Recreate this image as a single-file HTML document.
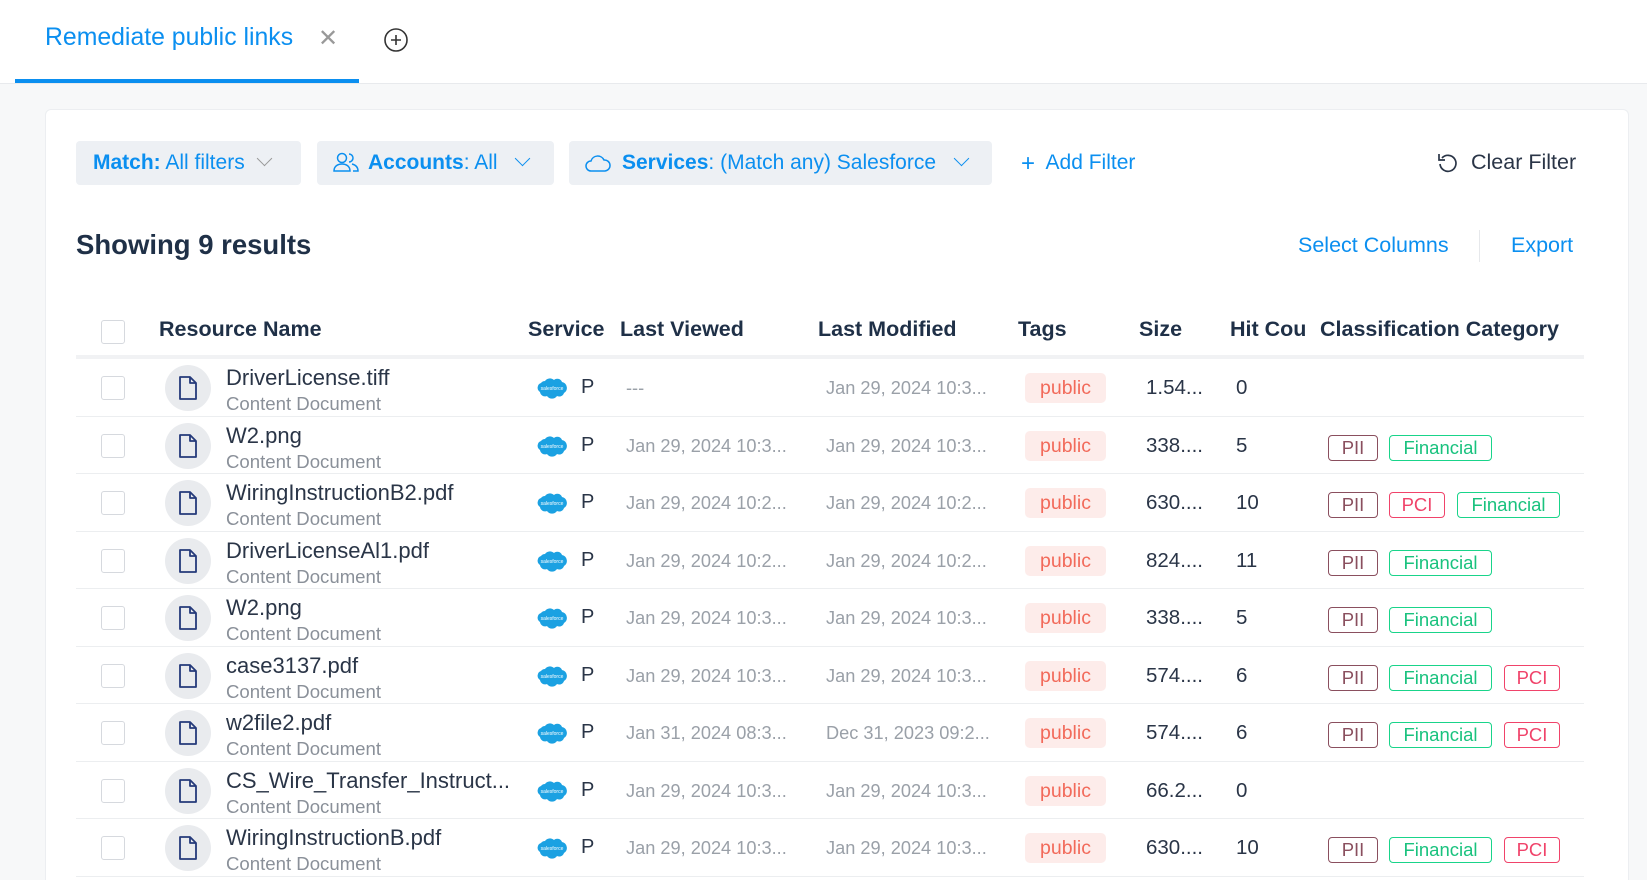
<!DOCTYPE html>
<html style="width:1647px;height:880px;overflow:hidden"><head><meta charset="utf-8"><style>
*{box-sizing:border-box;margin:0;padding:0}
body{width:1647px;height:880px;overflow:hidden;background:#f7f8f9;font-family:"Liberation Sans",sans-serif;color:#2a3547;position:relative}
.a{position:absolute;white-space:nowrap}
.top{position:absolute;left:0;top:0;width:1647px;height:84px;background:#fff;border-bottom:1px solid #e8eaed}
.card{position:absolute;left:45px;top:109px;width:1584px;height:771px;background:#fff;border:1px solid #eceef1;border-bottom:none;border-radius:6px 6px 0 0}
.chip{position:absolute;top:141px;height:44px;background:#edf0f4;border-radius:4px;color:#0b8ff0;font-size:21px;line-height:44px;padding-left:17px}
.chip b{color:#0b8ff0}
.cb{position:absolute;width:24px;height:24px;border:1px solid #d6d9de;border-radius:3px;background:#fff}
.th{position:absolute;top:317px;font-weight:bold;font-size:21.5px;color:#1f3047}
.row{position:absolute;left:76px;width:1508px;height:57.5px;border-bottom:1px solid #eceef0}
.row>*{position:absolute}
.ic{left:89px;top:6px;width:46px;height:46px;border-radius:50%;background:#e9ebee}
.ic svg{position:absolute;left:13px;top:10px}
.nm{left:150px;top:6px;font-size:22px;color:#2a3547}
.sb{left:150px;top:34px;font-size:18.6px;color:#8a9099}
.sf{left:460px;top:18px}
.p{left:505px;top:17px;font-size:20px;color:#2a3547}
.dt{top:19px;font-size:18.2px;color:#9aa0a8}
.pub{left:949px;top:14px;width:81px;height:30px;border-radius:5px;background:#fdecea;color:#f26a5a;font-size:19.5px;line-height:30px;text-align:center}
.sz{left:1070px;top:17px;font-size:20.5px}
.hc{left:1160px;top:17px;font-size:20.5px}
.tg{top:18px;height:26px;border:1px solid;border-radius:4px;font-size:18.5px;line-height:24px;text-align:center}
.pii{border-color:#8a4f5e;color:#8a4f5e;width:50px}
.pci{border-color:#f0436a;color:#f0436a;width:56px}
.fin{border-color:#19d48a;color:#19c27e;width:103px}
.chev{display:inline-block;width:11px;height:11px;border-right:1.6px solid;border-bottom:1.6px solid;transform:rotate(45deg);vertical-align:5px}
</style></head><body>
<div class="top">
 <div class="a" style="left:45px;top:24px;font-size:24.8px;color:#0b8ff0">Remediate public links</div>
 <div class="a" style="left:318px;top:24px;font-size:24px;color:#999">&#x2715;</div>
 <svg class="a" style="left:383px;top:27px" width="26" height="26" viewBox="0 0 26 26"><circle cx="13" cy="13" r="11" fill="none" stroke="#333" stroke-width="1.6"/><path d="M13 8v10M8 13h10" stroke="#333" stroke-width="1.6"/></svg>
 <div class="a" style="left:15px;top:79px;width:344px;height:4px;background:#0b8ff0"></div>
</div>
<div class="card"></div>
<div class="chip" style="left:76px;width:225px"><b>Match:</b> All filters <span class="chev" style="color:#999;margin-left:8px"></span></div>
<div class="chip" style="left:317px;width:237px;padding-left:15px">
 <svg style="vertical-align:-4px;margin-right:8px" width="28" height="22" viewBox="0 0 28 22"><circle cx="10" cy="7" r="4.5" fill="none" stroke="#0b8ff0" stroke-width="1.5"/><path d="M2 20c0-5 4-7 8-7s8 2 8 7z" fill="none" stroke="#0b8ff0" stroke-width="1.5"/><path d="M17 3a4 4 0 1 1 0 8M20 13c4 1 6 3 6 7h-5" fill="none" stroke="#0b8ff0" stroke-width="1.5"/></svg><b>Accounts</b>: All <span class="chev" style="margin-left:14px"></span></div>
<div class="chip" style="left:569px;width:423px;padding-left:15px">
 <svg style="vertical-align:-4px;margin-right:10px" width="28" height="20" viewBox="0 0 28 20"><path d="M7 18a5 5 0 0 1 0-10 7 7 0 0 1 13-1 5.5 5.5 0 0 1 1 11z" fill="none" stroke="#0b8ff0" stroke-width="1.5"/></svg><b>Services</b>: (Match any) Salesforce <span class="chev" style="margin-left:14px"></span></div>
<div class="a" style="left:1021px;top:150px;font-size:21px;color:#0b8ff0"><span style="font-size:24px;vertical-align:-2px">+</span>&nbsp; Add Filter</div>
<svg class="a" style="left:1437px;top:152px" width="22" height="22" viewBox="0 0 22 22"><path d="M5 6A8 8 0 1 1 3 12" fill="none" stroke="#2a3547" stroke-width="1.7"/><path d="M2 2v6h6" fill="none" stroke="#2a3547" stroke-width="1.7"/></svg>
<div class="a" style="left:1471px;top:150px;font-size:21.5px;color:#2a3547">Clear Filter</div>
<div class="a" style="left:76px;top:229px;font-size:27.5px;font-weight:bold;color:#1f3047">Showing 9 results</div>
<div class="a" style="left:1298px;top:233px;font-size:21.5px;color:#0b8ff0">Select Columns</div>
<div class="a" style="left:1479px;top:230px;width:1px;height:32px;background:#e6e8eb"></div>
<div class="a" style="left:1511px;top:233px;font-size:21.5px;color:#0b8ff0">Export</div>
<div class="cb" style="left:101px;top:320px"></div>
<div class="th" style="left:159px">Resource Name</div>
<div class="th" style="left:528px">Service</div>
<div class="th" style="left:620px">Last Viewed</div>
<div class="th" style="left:818px">Last Modified</div>
<div class="th" style="left:1018px">Tags</div>
<div class="th" style="left:1139px">Size</div>
<div class="th" style="left:1230px">Hit Cou</div>
<div class="th" style="left:1320px">Classification Category</div>
<div class="a" style="left:76px;top:355px;width:1508px;height:4px;background:#f1f2f4"></div>

<svg width="0" height="0" style="position:absolute"><defs>
<symbol id="doc" viewBox="0 0 20 26"><path d="M2 2h10l6 6v16H2z M12 2v6h6" fill="none" stroke="#253a7a" stroke-width="1.8" stroke-linejoin="round"/></symbol>
<symbol id="sfl" viewBox="0 0 32 22"><path d="M9 4a6 6 0 0 1 9-1 5 5 0 0 1 8 2 6 6 0 0 1 2 11 5 5 0 0 1-7 3 6 6 0 0 1-10 0 5 5 0 0 1-7-4 5 5 0 0 1 1-9 5 5 0 0 1 4-2z" fill="#1ba1e2"/><text x="16" y="13" font-size="5" fill="#fff" text-anchor="middle" font-family="Liberation Sans">salesforce</text></symbol>
</defs></svg>

<div class="row" style="top:359px"><div class="cb" style="left:25px;top:17px"></div><div class="ic"><svg width="20" height="26"><use href="#doc"/></svg></div><div class="nm">DriverLicense.tiff</div><div class="sb">Content Document</div><svg class="sf" width="32" height="22"><use href="#sfl"/></svg><div class="p">P</div><div class="dt" style="left:550px">---</div><div class="dt" style="left:750px">Jan 29, 2024 10:3...</div><div class="pub">public</div><div class="sz">1.54...</div><div class="hc">0</div></div>
<div class="row" style="top:416.5px"><div class="cb" style="left:25px;top:17px"></div><div class="ic"><svg width="20" height="26"><use href="#doc"/></svg></div><div class="nm">W2.png</div><div class="sb">Content Document</div><svg class="sf" width="32" height="22"><use href="#sfl"/></svg><div class="p">P</div><div class="dt" style="left:550px">Jan 29, 2024 10:3...</div><div class="dt" style="left:750px">Jan 29, 2024 10:3...</div><div class="pub">public</div><div class="sz">338....</div><div class="hc">5</div><div class="tg pii" style="left:1252px">PII</div><div class="tg fin" style="left:1313px">Financial</div></div>
<div class="row" style="top:474px"><div class="cb" style="left:25px;top:17px"></div><div class="ic"><svg width="20" height="26"><use href="#doc"/></svg></div><div class="nm">WiringInstructionB2.pdf</div><div class="sb">Content Document</div><svg class="sf" width="32" height="22"><use href="#sfl"/></svg><div class="p">P</div><div class="dt" style="left:550px">Jan 29, 2024 10:2...</div><div class="dt" style="left:750px">Jan 29, 2024 10:2...</div><div class="pub">public</div><div class="sz">630....</div><div class="hc">10</div><div class="tg pii" style="left:1252px">PII</div><div class="tg pci" style="left:1313px">PCI</div><div class="tg fin" style="left:1381px">Financial</div></div>
<div class="row" style="top:531.5px"><div class="cb" style="left:25px;top:17px"></div><div class="ic"><svg width="20" height="26"><use href="#doc"/></svg></div><div class="nm">DriverLicenseAl1.pdf</div><div class="sb">Content Document</div><svg class="sf" width="32" height="22"><use href="#sfl"/></svg><div class="p">P</div><div class="dt" style="left:550px">Jan 29, 2024 10:2...</div><div class="dt" style="left:750px">Jan 29, 2024 10:2...</div><div class="pub">public</div><div class="sz">824....</div><div class="hc">11</div><div class="tg pii" style="left:1252px">PII</div><div class="tg fin" style="left:1313px">Financial</div></div>
<div class="row" style="top:589px"><div class="cb" style="left:25px;top:17px"></div><div class="ic"><svg width="20" height="26"><use href="#doc"/></svg></div><div class="nm">W2.png</div><div class="sb">Content Document</div><svg class="sf" width="32" height="22"><use href="#sfl"/></svg><div class="p">P</div><div class="dt" style="left:550px">Jan 29, 2024 10:3...</div><div class="dt" style="left:750px">Jan 29, 2024 10:3...</div><div class="pub">public</div><div class="sz">338....</div><div class="hc">5</div><div class="tg pii" style="left:1252px">PII</div><div class="tg fin" style="left:1313px">Financial</div></div>
<div class="row" style="top:646.5px"><div class="cb" style="left:25px;top:17px"></div><div class="ic"><svg width="20" height="26"><use href="#doc"/></svg></div><div class="nm">case3137.pdf</div><div class="sb">Content Document</div><svg class="sf" width="32" height="22"><use href="#sfl"/></svg><div class="p">P</div><div class="dt" style="left:550px">Jan 29, 2024 10:3...</div><div class="dt" style="left:750px">Jan 29, 2024 10:3...</div><div class="pub">public</div><div class="sz">574....</div><div class="hc">6</div><div class="tg pii" style="left:1252px">PII</div><div class="tg fin" style="left:1313px">Financial</div><div class="tg pci" style="left:1428px">PCI</div></div>
<div class="row" style="top:704px"><div class="cb" style="left:25px;top:17px"></div><div class="ic"><svg width="20" height="26"><use href="#doc"/></svg></div><div class="nm">w2file2.pdf</div><div class="sb">Content Document</div><svg class="sf" width="32" height="22"><use href="#sfl"/></svg><div class="p">P</div><div class="dt" style="left:550px">Jan 31, 2024 08:3...</div><div class="dt" style="left:750px">Dec 31, 2023 09:2...</div><div class="pub">public</div><div class="sz">574....</div><div class="hc">6</div><div class="tg pii" style="left:1252px">PII</div><div class="tg fin" style="left:1313px">Financial</div><div class="tg pci" style="left:1428px">PCI</div></div>
<div class="row" style="top:761.5px"><div class="cb" style="left:25px;top:17px"></div><div class="ic"><svg width="20" height="26"><use href="#doc"/></svg></div><div class="nm">CS_Wire_Transfer_Instruct...</div><div class="sb">Content Document</div><svg class="sf" width="32" height="22"><use href="#sfl"/></svg><div class="p">P</div><div class="dt" style="left:550px">Jan 29, 2024 10:3...</div><div class="dt" style="left:750px">Jan 29, 2024 10:3...</div><div class="pub">public</div><div class="sz">66.2...</div><div class="hc">0</div></div>
<div class="row" style="top:819px"><div class="cb" style="left:25px;top:17px"></div><div class="ic"><svg width="20" height="26"><use href="#doc"/></svg></div><div class="nm">WiringInstructionB.pdf</div><div class="sb">Content Document</div><svg class="sf" width="32" height="22"><use href="#sfl"/></svg><div class="p">P</div><div class="dt" style="left:550px">Jan 29, 2024 10:3...</div><div class="dt" style="left:750px">Jan 29, 2024 10:3...</div><div class="pub">public</div><div class="sz">630....</div><div class="hc">10</div><div class="tg pii" style="left:1252px">PII</div><div class="tg fin" style="left:1313px">Financial</div><div class="tg pci" style="left:1428px">PCI</div></div>
</body></html>
